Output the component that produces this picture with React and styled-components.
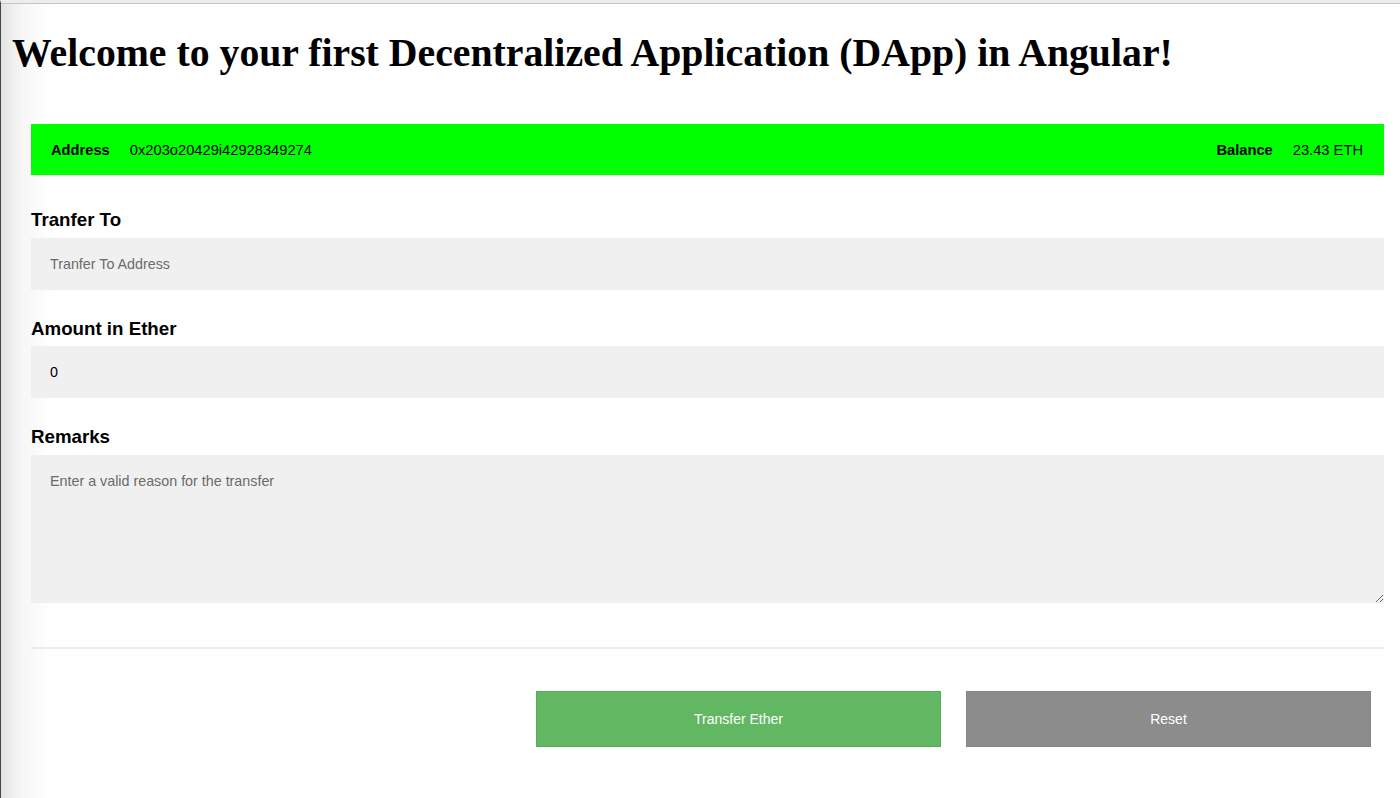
import styled, { createGlobalStyle } from 'styled-components';

const GlobalStyle = createGlobalStyle`
  html, body {
    margin: 0;
    padding: 0;
    background: #ffffff;
  }
`;

const Frame = styled.div`
  min-height: 798px;
  box-sizing: border-box;
  border-top: 3px solid #ededed;
  border-left: 1px solid #3f4852;
  background: linear-gradient(to right, #e4e4e4 0px, #f6f6f6 20px, #ffffff 50px);

  &::before {
    content: '';
    display: block;
    height: 1px;
    background: #c4c4c4;
  }
`;

const Title = styled.h1`
  margin: 26px 0 0 11px;
  font-family: 'Liberation Serif', 'Times New Roman', serif;
  font-weight: 700;
  font-size: 39.75px;
  line-height: 46px;
  color: #000;
`;

const Content = styled.div`
  padding: 0 16px 0 30px;
  margin-top: 48px;
  font-family: 'Liberation Sans', Arial, sans-serif;
`;

const AccountBar = styled.div`
  display: flex;
  align-items: center;
  justify-content: space-between;
  height: 51px;
  padding: 0 21px 0 20px;
  background: #00ff00;
  font-size: 14.7px;
  color: #000;
`;

const Pair = styled.div`
  display: flex;
  align-items: center;
  gap: 20px;
`;

const Key = styled.span`
  font-weight: 700;
`;

const Label = styled.h3`
  margin: ${(p) => (p.$first ? '34px' : '28px')} 0 7px;
  font-size: 18.72px;
  font-weight: 700;
  line-height: 21.5px;
  color: #000;
`;

const Input = styled.input`
  display: block;
  width: 100%;
  height: 52px;
  box-sizing: border-box;
  border: none;
  outline: none;
  padding: 0 19px;
  background: #f0f0f0;
  font-family: 'Liberation Sans', Arial, sans-serif;
  font-size: 14.3px;
  color: #000;

  &::placeholder {
    color: #6b6b6b;
  }
`;

const TextArea = styled.textarea`
  display: block;
  width: 100%;
  height: 148px;
  box-sizing: border-box;
  border: none;
  outline: none;
  padding: 18px 19px;
  background: #f0f0f0;
  font-family: 'Liberation Sans', Arial, sans-serif;
  font-size: 14.3px;
  color: #000;

  &::placeholder {
    color: #6b6b6b;
  }
`;

const Divider = styled.hr`
  margin: 44px 0 0;
  border: none;
  height: 2px;
  background: #ebebeb;
`;

const Actions = styled.div`
  display: flex;
  justify-content: flex-end;
  gap: 25px;
  padding: 42px 13px 0 0;
`;

const Button = styled.button`
  width: 405px;
  height: 56px;
  box-sizing: border-box;
  border: 1px solid ${(p) => (p.$variant === 'primary' ? '#57ad57' : '#858585')};
  background: ${(p) => (p.$variant === 'primary' ? '#62b762' : '#8c8c8c')};
  color: #ffffff;
  font-family: 'Liberation Sans', Arial, sans-serif;
  font-size: 14px;
  cursor: pointer;
`;

export default function App() {
  return (
    <>
      <GlobalStyle />
      <Frame>
        <Title>Welcome to your first Decentralized Application (DApp) in Angular!</Title>
        <Content>
          <AccountBar>
            <Pair>
              <Key>Address</Key>
              <span>0x203o20429i42928349274</span>
            </Pair>
            <Pair>
              <Key>Balance</Key>
              <span>23.43 ETH</span>
            </Pair>
          </AccountBar>

          <Label $first>Tranfer To</Label>
          <Input type="text" placeholder="Tranfer To Address" />

          <Label>Amount in Ether</Label>
          <Input type="number" defaultValue="0" />

          <Label>Remarks</Label>
          <TextArea placeholder="Enter a valid reason for the transfer" />

          <Divider />

          <Actions>
            <Button type="button" $variant="primary">Transfer Ether</Button>
            <Button type="button">Reset</Button>
          </Actions>
        </Content>
      </Frame>
    </>
  );
}
